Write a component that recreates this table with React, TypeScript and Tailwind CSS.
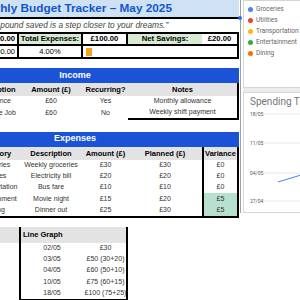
import React from "react";

const font = "font-['Liberation_Sans',Arial,sans-serif]";
const hdr = "bg-[#e3e3e3] font-bold text-[7.5px] text-black";
const row = "flex h-[11.2px] items-center text-[7px] text-[#333]";
const A = "w-[48px] shrink-0 flex justify-center overflow-visible whitespace-nowrap";
const B = "w-[64px] shrink-0 flex justify-center whitespace-nowrap";
const C = "w-[45px] shrink-0 flex justify-center whitespace-nowrap";
const D = "w-[74px] shrink-0 flex justify-center whitespace-nowrap";
const E = "w-[37px] shrink-0 flex justify-center whitespace-nowrap h-full items-center";

const expenses = [
  ["Groceries", "Weekly groceries", "£30", "£30", "£0"],
  ["Utilities", "Electricity bill", "£20", "£20", "£0"],
  ["Transportation", "Bus fare", "£10", "£10", "£0"],
  ["Entertainment", "Movie night", "£15", "£20", "£5"],
  ["Dining", "Dinner out", "£25", "£30", "£5"],
];

const graph = [
  ["02/05", "£30"],
  ["03/05", "£50 (30+20)"],
  ["04/05", "£60 (50+10)"],
  ["10/05", "£75 (60+15)"],
  ["18/05", "£100 (75+25)"],
];

const legend = [
  ["Groceries", "bg-[#4285f4]"],
  ["Utilities", "bg-[#ea4335]"],
  ["Transportation", "bg-[#fbbc04]"],
  ["Entertainment", "bg-[#34a853]"],
  ["Dining", "bg-[#ff6d01]"],
];

function Sheet() {
  return (
    <div className="w-[240px] shrink-0 overflow-hidden">
      <div className="w-[268px] -ml-[29px] flex flex-col">
        {/* title */}
        <div className="h-[19px] bg-[#cfe2f3] border-b-2 border-black flex items-center">
          <span className="ml-[1px] text-[11.8px] font-bold text-[#1155cc] whitespace-nowrap">
            Monthly Budget Tracker – May 2025
          </span>
        </div>
        <div className="h-[15px] border-b-2 border-black flex items-center">
          <span className="ml-[3px] text-[8.3px] italic text-[#444] whitespace-nowrap">
            “Every pound saved is a step closer to your dreams.”
          </span>
        </div>

        {/* totals */}
        <div className="flex h-[12px] border-b-2 border-black text-[7.7px] font-bold text-black">
          <div className="w-[48px] shrink-0 flex justify-end items-center pr-[2px] border-r-2 border-black">£120.00</div>
          <div className="w-[64px] shrink-0 flex justify-center items-center bg-[#d9ead3] border-r-2 border-black">Total Expenses:</div>
          <div className="w-[45px] shrink-0 flex justify-center items-center border-r-2 border-black">£100.00</div>
          <div className="w-[74px] shrink-0 flex justify-center items-center bg-[#d9ead3]">Net Savings:</div>
          <div className="w-[37px] shrink-0 flex justify-center items-center border-r-2 border-black">£20.00</div>
        </div>
        <div className="flex h-[13px] border-b-2 border-black text-[7.5px] text-black">
          <div className="w-[48px] shrink-0 flex justify-end items-center pr-[2px] border-r-2 border-black">£500.00</div>
          <div className="w-[64px] shrink-0 flex justify-center items-center border-r-2 border-black">4.00%</div>
          <div className="w-[156px] shrink-0 flex items-center pl-[3px] border-r-2 border-black">
            <div className="w-[6px] h-[8px] bg-[#f5a11c]"></div>
          </div>
        </div>
        <div className="h-[9px]"></div>

        {/* income */}
        <div className="h-[15px] bg-[#1a53d6] flex items-center">
          <div className="w-[208px] text-center text-[9px] font-bold text-white">Income</div>
        </div>
        <div className={`flex h-[13px] items-center ${hdr}`}>
          <div className={A}>Description</div>
          <div className={B}>Amount (£)</div>
          <div className={C}>Recurring?</div>
          <div className="w-[111px] shrink-0 flex justify-center h-full items-center border-r-2 border-black">Notes</div>
        </div>
        <div className={row}>
          <div className={A}>Allowance</div>
          <div className={B}>£60</div>
          <div className={C}>Yes</div>
          <div className="w-[111px] shrink-0 flex justify-center h-full items-center border-r-2 border-black">Monthly allowance</div>
        </div>
        <div className="flex h-[12.5px] items-center text-[7px] text-[#333]">
          <div className={A}>Part-time Job</div>
          <div className={B}>£60</div>
          <div className={C}>No</div>
          <div className="w-[111px] shrink-0 flex justify-center h-full items-center border-r-2 border-b-2 border-black">Weekly shift payment</div>
        </div>
        <div className="h-[12px]"></div>

        {/* expenses */}
        <div className="h-[15px] bg-[#1a53d6] flex items-center">
          <div className="w-[208px] text-center text-[9px] font-bold text-white">Expenses</div>
        </div>
        <div className={`flex h-[13px] items-center ${hdr}`}>
          <div className={A}>Category</div>
          <div className={B}>Description</div>
          <div className={C}>Amount (£)</div>
          <div className={D}>Planned (£)</div>
          <div className={`${E} border-x-2 border-black`}>Variance</div>
        </div>
        {expenses.map((e, i) => (
          <div key={i} className={row}>
            <div className={A}>{e[0]}</div>
            <div className={B}>{e[1]}</div>
            <div className={C}>{e[2]}</div>
            <div className={D}>{e[3]}</div>
            <div className={`${E} border-x-2 border-black ${i > 2 ? "bg-[#b7e1cd]" : ""}`}>{e[4]}</div>
          </div>
        ))}
        <div className="h-[2px] bg-black"></div>
        <div className="h-[9px]"></div>

        {/* line graph data */}
        <div className="flex">
          <div className="w-[48px] shrink-0">
            <div className="h-[16px] bg-[#e3e3e3]"></div>
          </div>
          <div className="w-[109px] shrink-0 border-x-2 border-b-2 border-black">
            <div className="h-[16px] bg-[#e3e3e3] flex items-center pl-[2px] text-[7.5px] font-bold text-black">Line Graph</div>
            {graph.map((g, i) => (
              <div key={i} className="flex h-[11.2px] items-center text-[7px] text-[#333]">
                <div className="w-[62px] shrink-0 flex justify-center">{g[0]}</div>
                <div className="w-[45px] shrink-0 flex justify-center whitespace-nowrap">{g[1]}</div>
              </div>
            ))}
          </div>
        </div>
      </div>
    </div>
  );
}

function Charts() {
  return (
    <div className="w-[60px] shrink-0 h-[213px] border-l border-[#9aa0a6] pl-[2px] flex flex-col font-['Roboto',sans-serif]">
      <div className="h-[88px] border border-r-0 border-[#d5d5d5] bg-white pt-[3px] flex flex-col">
        {legend.map(([name, dot]) => (
          <div key={name} className="h-[11px] flex items-center gap-[3px] pl-[4px]">
            <div className={`w-[5px] h-[5px] rounded-full shrink-0 ${dot}`}></div>
            <span className="text-[6.5px] text-[#666] whitespace-nowrap">{name}</span>
          </div>
        ))}
      </div>
      <div className="h-[4px] bg-[#ececec]"></div>
      <div className="flex-1 border border-r-0 border-[#d5d5d5] bg-white flex flex-col overflow-hidden">
        <div className="h-[17px] pl-[6px] pt-[3px] text-[10px] leading-[12px] text-[#757575] whitespace-nowrap">Spending Trend</div>
        <svg width="57" height="100" className="block">
          {[
            ["18/05", 4],
            ["11/05", 33],
            ["04/05", 63],
            ["27/04", 91],
          ].map(([l, y]) => (
            <g key={l as string}>
              <text x="6" y={(y as number) + 1.8} fontSize="5" fill="#555" fontFamily="Roboto, sans-serif">{l}</text>
              <line x1="19" x2="57" y1={y as number} y2={y as number} stroke="#e2e2e2" strokeWidth="0.8" />
            </g>
          ))}
          <polyline points="34,72 57,65" fill="none" stroke="#4285f4" strokeWidth="1" />
        </svg>
      </div>
    </div>
  );
}

export default function App() {
  return (
    <div className={`relative w-[300px] h-[300px] overflow-hidden bg-white flex ${font}`}>
      <Sheet />
      <Charts />
      <div className="absolute left-[238px] top-[16px] w-[4px] h-[4px] rounded-full bg-[#1a73e8]"></div>
    </div>
  );
}
